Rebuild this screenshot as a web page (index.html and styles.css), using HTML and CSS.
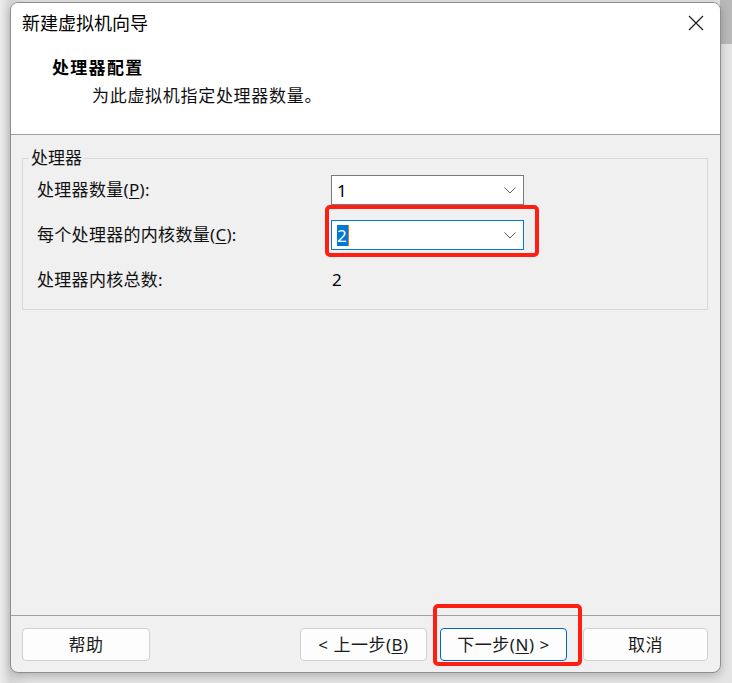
FILE: index.html
```html
<!DOCTYPE html>
<html lang="zh-CN">
<head>
<meta charset="utf-8">
<title>新建虚拟机向导</title>
<link rel="stylesheet" href="styles.css">
</head>
<body>
<div class="window">
  <div class="top">
    <div class="titlebar">
      <span class="title">新建虚拟机向导</span>
      <svg class="close" width="16" height="16" viewBox="0 0 16 16"><path d="M1 1 L15 15 M15 1 L1 15" stroke="#1a1a1a" stroke-width="1.2" fill="none"/></svg>
    </div>
    <div class="head-title">处理器配置</div>
    <div class="head-sub">为此虚拟机指定处理器数量。</div>
  </div>
  <div class="content">
    <fieldset class="group">
      <legend>处理器</legend>
      <div class="grid">
        <div class="label">处理器数量(<u>P</u>):</div>
        <div class="combo">
          <span class="val">1</span>
          <svg class="chev" width="12" height="7" viewBox="0 0 12 7"><path d="M0.5 0.5 L6 6 L11.5 0.5" stroke="#5f5f5f" stroke-width="1" fill="none"/></svg>
        </div>
        <div class="label">每个处理器的内核数量(<u>C</u>):</div>
        <div class="combo focus">
          <span class="val sel">2</span><span class="caret"></span>
          <svg class="chev" width="12" height="7" viewBox="0 0 12 7"><path d="M0.5 0.5 L6 6 L11.5 0.5" stroke="#5f5f5f" stroke-width="1" fill="none"/></svg>
        </div>
        <div class="label">处理器内核总数:</div>
        <div class="total">2</div>
      </div>
    </fieldset>
  </div>
  <div class="footer">
    <button class="btn help">帮助</button>
    <button class="btn prev">&lt; 上一步(<u>B</u>)</button>
    <button class="btn next">下一步(<u>N</u>) &gt;</button>
    <button class="btn cancel">取消</button>
  </div>
</div>
<div class="mark mark-combo"></div>
<div class="mark mark-next"></div>
</body>
</html>
```
FILE: styles.css
```css
html, body {
  margin: 0;
  padding: 0;
}
body {
  width: 732px;
  height: 683px;
  overflow: hidden;
  position: relative;
  font-family: "Noto Sans", "Noto Sans CJK SC", sans-serif;
  color: #000;
  background:
    linear-gradient(#b9b9b9, #b9b9b9) no-repeat right top / 12px 44px,
    linear-gradient(90deg, #ececec 0px, #d8d8d8 10px, #e4e4e4 30px) no-repeat left top / 100% 100%;
  background-color: #e4e4e4;
}
.window {
  box-sizing: border-box;
  margin: 2px 0 0 10px;
  width: 711px;
  height: 671px;
  border: 1px solid #8e8e8e;
  border-radius: 8px;
  background: #f0f0f0;
  box-shadow: 0 3px 10px rgba(0, 0, 0, 0.22);
  overflow: hidden;
  display: flex;
  flex-direction: column;
}
.top {
  height: 131px;
  background: #fff;
  border-bottom: 1px solid #a0a0a0;
  flex: none;
}
.titlebar {
  height: 40px;
  display: flex;
  align-items: center;
  justify-content: space-between;
  padding: 0 16px 0 11px;
}
.title {
  font-size: 18px;
  line-height: 24px;
}
.close {
  display: block;
}
.head-title {
  margin-top: 13px;
  padding-left: 41px;
  font-size: 17px;
  font-weight: bold;
  letter-spacing: 1.3px;
  line-height: 24px;
}
.head-sub {
  margin-top: 4px;
  padding-left: 81px;
  font-size: 17px;
  letter-spacing: 0.7px;
  line-height: 24px;
  color: #111;
}
.content {
  flex: 1;
  padding: 13px 12px 0 11px;
}
.group {
  margin: 0;
  padding: 7px 14px 14px 14px;
  border: 1px solid #d9d9d9;
  min-width: 0;
}
.group legend {
  margin-left: -8px;
  padding: 0 2px;
  font-size: 17px;
  line-height: 20px;
  color: #111;
}
.grid {
  display: grid;
  grid-template-columns: 294px 193px;
  grid-auto-rows: 30px;
  row-gap: 15px;
  align-items: center;
}
.label {
  font-size: 17px;
  line-height: 30px;
  letter-spacing: 0.3px;
  color: #111;
}
.label u, .btn u {
  text-decoration-thickness: 1px;
  text-underline-offset: 2px;
}
.combo {
  box-sizing: border-box;
  height: 30px;
  background: #fff;
  border: 1px solid #7a7a7a;
  display: flex;
  align-items: center;
  padding: 0 7px 0 5px;
}
.combo.focus {
  border-color: #0078d7;
}
.val {
  font-size: 17px;
  line-height: 21px;
}
.val.sel {
  background: #0078d7;
  color: #fff;
  padding: 0 1px 0 0;
}
.caret {
  width: 1px;
  height: 21px;
  background: #e07a20;
}
.chev {
  margin-left: auto;
  display: block;
}
.total {
  font-size: 17px;
  line-height: 30px;
  padding-left: 1px;
}
.footer {
  flex: none;
  height: 57px;
  border-top: 1px solid #a0a0a0;
  display: flex;
  align-items: flex-start;
  padding: 12px 0 0 11px;
  box-sizing: border-box;
}
.btn {
  box-sizing: border-box;
  height: 33px;
  background: #fdfdfd;
  border: 1px solid #d0d0d0;
  border-radius: 4px;
  font-family: "Noto Sans", "Noto Sans CJK SC", sans-serif;
  font-size: 17px;
  line-height: 22px;
  color: #1b1b1b;
  padding: 0;
  letter-spacing: 0.5px;
}
.help {
  width: 128px;
}
.prev {
  width: 127px;
  margin-left: 150px;
}
.next {
  width: 127px;
  margin-left: 13px;
  border-color: #0067c0;
}
.cancel {
  width: 125px;
  margin-left: 16px;
}
.mark {
  position: absolute;
  box-sizing: border-box;
  border: 4px solid #ff1e12;
  border-radius: 5px;
}
.mark-combo {
  left: 325px;
  top: 205px;
  width: 214px;
  height: 52px;
}
.mark-next {
  left: 433px;
  top: 604px;
  width: 149px;
  height: 62px;
}
```
